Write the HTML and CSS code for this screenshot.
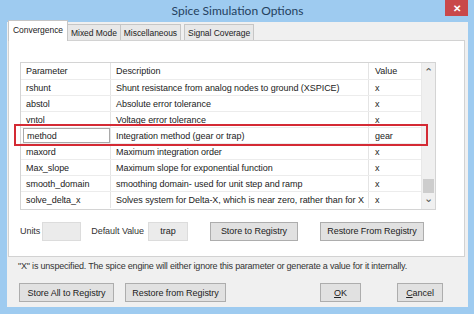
FILE: index.html
```html
<!DOCTYPE html>
<html lang="en">
<head>
  <meta charset="UTF-8">
  <title>Spice Simulation Options</title>
  <link rel="stylesheet" href="styles.css">
</head>
<body>

  <div class="window">
    <div class="titlebar">
      <span class="title">Spice Simulation Options</span>
      <span class="close">✕</span>
    </div>

    <div class="client">
      <div class="tabs">
        <span class="tab active">Convergence</span>
        <span class="tab">Mixed Mode</span>
        <span class="tab">Miscellaneous</span>
        <span class="tab">Signal Coverage</span>
      </div>

      <div class="panel">
        <div class="grid-wrap">
          <div class="grid">
            <div class="row head">
              <div class="cell c1">Parameter</div>
              <div class="cell c2">Description</div>
              <div class="cell c3">Value</div>
            </div>
            <div class="row">
              <div class="cell c1">rshunt</div>
              <div class="cell c2">Shunt resistance from analog nodes to ground (XSPICE)</div>
              <div class="cell c3">x</div>
            </div>
            <div class="row">
              <div class="cell c1">abstol</div>
              <div class="cell c2">Absolute error tolerance</div>
              <div class="cell c3">x</div>
            </div>
            <div class="row">
              <div class="cell c1">vntol</div>
              <div class="cell c2">Voltage error tolerance</div>
              <div class="cell c3">x</div>
            </div>
            <div class="row editing">
              <div class="cell c1"><span class="edit">method</span></div>
              <div class="cell c2">Integration method (gear or trap)</div>
              <div class="cell c3">gear</div>
            </div>
            <div class="row">
              <div class="cell c1">maxord</div>
              <div class="cell c2">Maximum integration order</div>
              <div class="cell c3">x</div>
            </div>
            <div class="row">
              <div class="cell c1">Max_slope</div>
              <div class="cell c2">Maximum slope for exponential function</div>
              <div class="cell c3">x</div>
            </div>
            <div class="row">
              <div class="cell c1">smooth_domain</div>
              <div class="cell c2">smoothing domain- used for unit step and ramp</div>
              <div class="cell c3">x</div>
            </div>
            <div class="row">
              <div class="cell c1">solve_delta_x</div>
              <div class="cell c2">Solves system for Delta-X, which is near zero, rather than for X</div>
              <div class="cell c3">x</div>
            </div>
          </div>
          <div class="scrollbar">
            <span class="arrow">&#8963;</span>
            <span class="track"><span class="thumb"></span></span>
            <span class="arrow down">&#8964;</span>
          </div>
          <div class="highlight"></div>
        </div>

        <div class="fields">
          <span class="label">Units</span>
          <span class="box units"></span>
          <span class="label dv">Default Value</span>
          <span class="box default">trap</span>
          <span class="btn store">Store to Registry</span>
          <span class="btn restore">Restore From Registry</span>
        </div>
      </div>

      <p class="note">"X" is unspecified. The spice engine will either ignore this parameter or generate a value for it internally.</p>

      <div class="actions">
        <span class="btn all">Store All to Registry</span>
        <span class="btn from">Restore from Registry</span>
        <span class="spacer"></span>
        <span class="btn ok"><u>O</u>K</span>
        <span class="btn cancel"><u>C</u>ancel</span>
      </div>
    </div>
  </div>

</body>
</html>
```

FILE: styles.css
```css
body {
  margin: 0;
  font-family: 'Liberation Sans', Arial, sans-serif;
  font-size: 9px;
  letter-spacing: -0.05px;
  color: #222;
  background: #9ecbf0;
}

.window {
  width: 474px;
  height: 314px;
  box-sizing: border-box;
  padding: 0 6px 7px 7px;
  background: #9ecbf0;
  display: flex;
  flex-direction: column;
}

.titlebar {
  height: 22px;
  position: relative;
  display: flex;
  justify-content: center;
  align-items: center;
}

.title {
  font-family: Lato, 'Open Sans', sans-serif;
  font-size: 12px;
  letter-spacing: 0;
  color: #24415e;
  margin-top: -1px;
}

.close {
  position: absolute;
  top: 0;
  right: 0;
  width: 23px;
  height: 16px;
  background: #c9484a;
  color: #fff;
  font-size: 10px;
  font-weight: bold;
  display: flex;
  justify-content: center;
  align-items: center;
}

.client {
  flex: 1;
  background: #f0f0f0;
  display: flex;
  flex-direction: column;
  padding: 0 3px 0 1px;
}

/* tabs */
.tabs {
  display: flex;
  height: 18px;
  align-items: flex-end;
}

.tab {
  height: 15px;
  padding: 0 3px;
  border: 1px solid #c6c6c6;
  border-bottom: none;
  background: #e8e8e8;
  display: flex;
  align-items: center;
  margin-left: -1px;
  font-size: 8.5px;
}

.tab.active {
  height: 18px;
  margin-left: 0;
  margin-bottom: -1px;
  background: #fff;
  padding: 0 4px 2px 4px;
  position: relative;
  z-index: 2;
}

.tab:nth-child(4) {
  margin-left: 3px;
}

.panel {
  height: 217px;
  background: #fff;
  border: 1px solid #d2d2d2;
  padding: 21px 0 0 11px;
  box-sizing: border-box;
}

/* grid */
.grid-wrap {
  position: relative;
  width: 416px;
  height: 148px;
  border: 1px solid #d4d4d4;
  box-sizing: border-box;
  display: flex;
}

.grid {
  flex: 1;
}

.row {
  display: flex;
  height: 16px;
  border-bottom: 1px solid #ececec;
  box-sizing: border-box;
}

.row.head {
  height: 17px;
}

.row:last-child {
  border-bottom: none;
}

.cell {
  display: flex;
  align-items: center;
  padding-left: 5px;
  box-sizing: border-box;
  white-space: nowrap;
  overflow: hidden;
}

.c1 {
  width: 90px;
  border-right: 1px solid #e4e4e4;
}

.c2 {
  width: 258px;
  border-right: 1px solid #e4e4e4;
}

.c3 {
  flex: 1;
  padding-left: 6px;
}

.editing .c1 {
  padding: 1px 0 1px 2px;
}

.edit {
  display: flex;
  align-items: center;
  width: 87px;
  height: 15px;
  box-sizing: border-box;
  border: 1px solid #a9a9a9;
  padding-left: 3px;
}

.scrollbar {
  width: 13px;
  background: #f0f0f0;
  border-left: 1px solid #e8e8e8;
  display: flex;
  flex-direction: column;
  align-items: center;
}

.arrow {
  height: 14px;
  font-size: 11px;
  line-height: 18px;
  color: #555;
}

.arrow.down {
  line-height: 6px;
}

.track {
  flex: 1;
  width: 100%;
  display: flex;
  flex-direction: column;
  justify-content: flex-end;
}

.thumb {
  height: 14px;
  margin: 0 1px 2px 1px;
  background: #cdcdcd;
}

.highlight {
  position: absolute;
  left: -7px;
  top: 61px;
  width: 414px;
  height: 22px;
  border: 2px solid #d42a34;
  box-sizing: border-box;
}

/* fields row */
.fields {
  display: flex;
  align-items: center;
  margin-top: 11px;
  height: 20px;
}

.label {
  color: #333;
}

.box {
  height: 19px;
  background: #ebebeb;
  border: 1px solid #dcdcdc;
  box-sizing: border-box;
  display: flex;
  align-items: center;
  justify-content: center;
}

.units {
  width: 39px;
  margin-left: 2px;
}

.dv {
  margin-left: 10px;
}

.default {
  width: 40px;
  margin-left: 4px;
}

.btn {
  height: 19px;
  background: #e1e1e1;
  border: 1px solid #adadad;
  box-sizing: border-box;
  display: flex;
  align-items: center;
  justify-content: center;
  color: #222;
}

.store {
  width: 88px;
  margin-left: 22px;
}

.restore {
  width: 104px;
  margin-left: 22px;
}

.note {
  margin: 4px 0 0 10px;
  color: #333;
  letter-spacing: -0.2px;
  white-space: nowrap;
}

.actions {
  display: flex;
  margin: 12px 0 0 11px;
}

.all {
  width: 95px;
}

.from {
  width: 101px;
  margin-left: 11px;
}

.spacer {
  flex: 1;
}

.ok {
  width: 41px;
}

.cancel {
  width: 46px;
  margin-left: 36px;
  margin-right: 22px;
}
```
